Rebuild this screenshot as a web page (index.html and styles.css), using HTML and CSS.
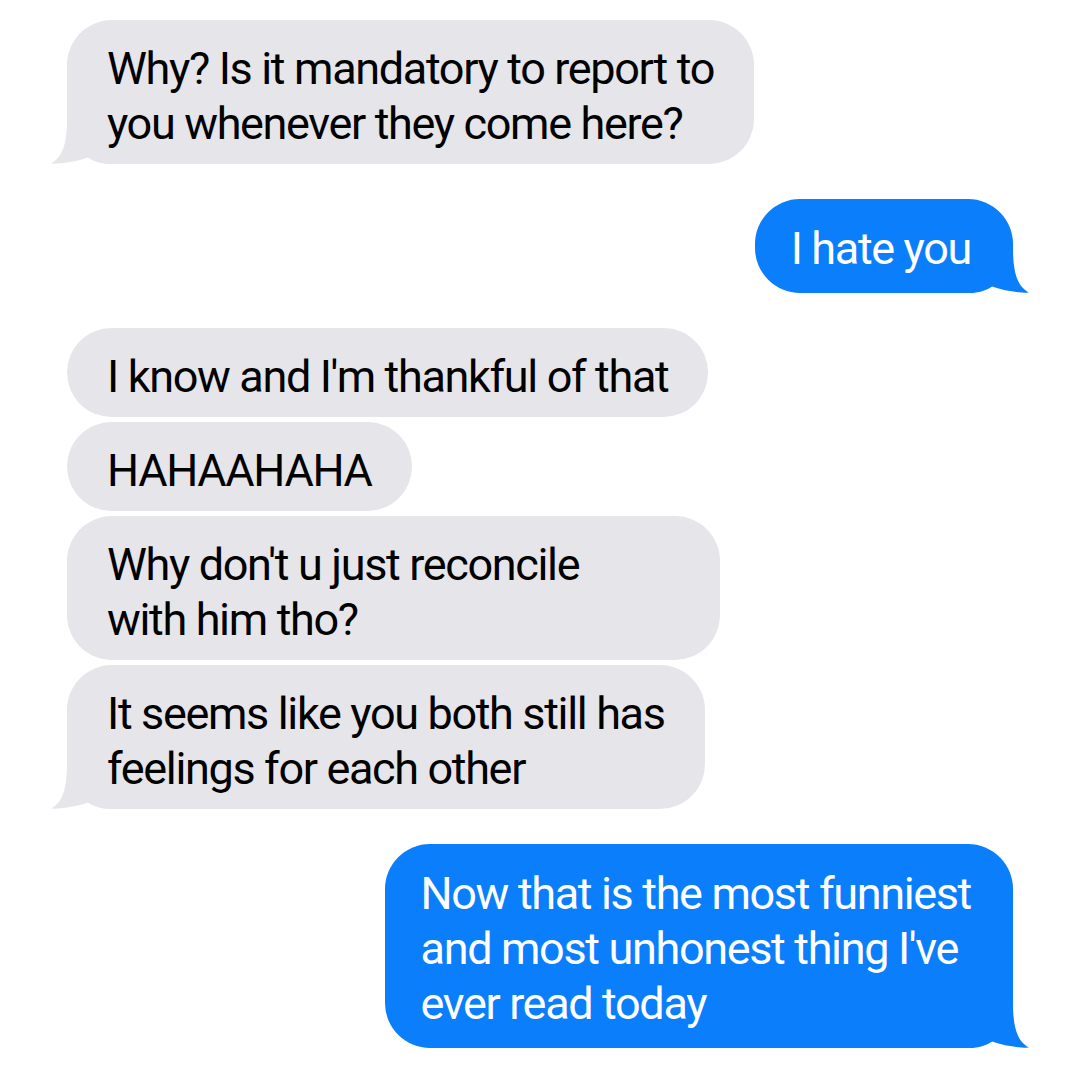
FILE: index.html
```html
<!DOCTYPE html>
<html lang="en">
<head>
  <meta charset="UTF-8" />
  <title>Messages</title>
  <link rel="stylesheet" href="styles.css">
</head>
<body>

  <div class="thread">

    <div class="msg them has-tail">
      Why? Is it mandatory to report to<br>you whenever they come here?
      <svg class="tail" viewBox="0 0 60 45" aria-hidden="true"><path d="M16,0 C16,24 12,38 0,44.6 C9,45 24,43 37,38.5 C43,42.5 50,45 60,45 L60,0 Z"/></svg>
    </div>

    <div class="msg me has-tail group-start">
      I hate you
      <svg class="tail" viewBox="0 0 60 45" aria-hidden="true"><path d="M16,0 C16,24 12,38 0,44.6 C9,45 24,43 37,38.5 C43,42.5 50,45 60,45 L60,0 Z"/></svg>
    </div>

    <div class="msg them group-start">I know and I'm thankful of that</div>
    <div class="msg them">HAHAAHAHA</div>
    <div class="msg them wide">Why don't u just reconcile<br>with him tho?</div>
    <div class="msg them has-tail">
      It seems like you both still has<br>feelings for each other
      <svg class="tail" viewBox="0 0 60 45" aria-hidden="true"><path d="M16,0 C16,24 12,38 0,44.6 C9,45 24,43 37,38.5 C43,42.5 50,45 60,45 L60,0 Z"/></svg>
    </div>

    <div class="msg me has-tail group-start">
      Now that is the most funniest<br>and most unhonest thing I've<br>ever read today
      <svg class="tail" viewBox="0 0 60 45" aria-hidden="true"><path d="M16,0 C16,24 12,38 0,44.6 C9,45 24,43 37,38.5 C43,42.5 50,45 60,45 L60,0 Z"/></svg>
    </div>

  </div>

</body>
</html>
```

FILE: styles.css
```css
body {
  margin: 0;
  background: #ffffff;
  font-family: Roboto, 'Liberation Sans', sans-serif;
}

.thread {
  display: flex;
  flex-direction: column;
  gap: 5px;
  padding: 20px 62px 20px 67px;
}

.msg {
  position: relative;
  isolation: isolate;
  width: fit-content;
  box-sizing: border-box;
  padding: 21px 40px 13px 40px;
  border-radius: 45px;
  font-size: 45px;
  line-height: 55px;
  letter-spacing: -1.35px;
  white-space: nowrap;
}

.msg.group-start {
  margin-top: 30px;
}

.them {
  align-self: flex-start;
  background: #e5e5ea;
  color: #000;
}

.me {
  align-self: flex-end;
  background: #0b7efb;
  color: #fff;
  padding: 22px 42px 17px 36px;
}

.them.wide {
  width: 653px;
}

.tail {
  position: absolute;
  z-index: -1;
  bottom: 0;
  width: 60px;
  height: 45px;
}

.them .tail {
  left: -16px;
  fill: #e5e5ea;
}

.me .tail {
  right: -16px;
  transform: scaleX(-1);
  fill: #0b7efb;
}
```
